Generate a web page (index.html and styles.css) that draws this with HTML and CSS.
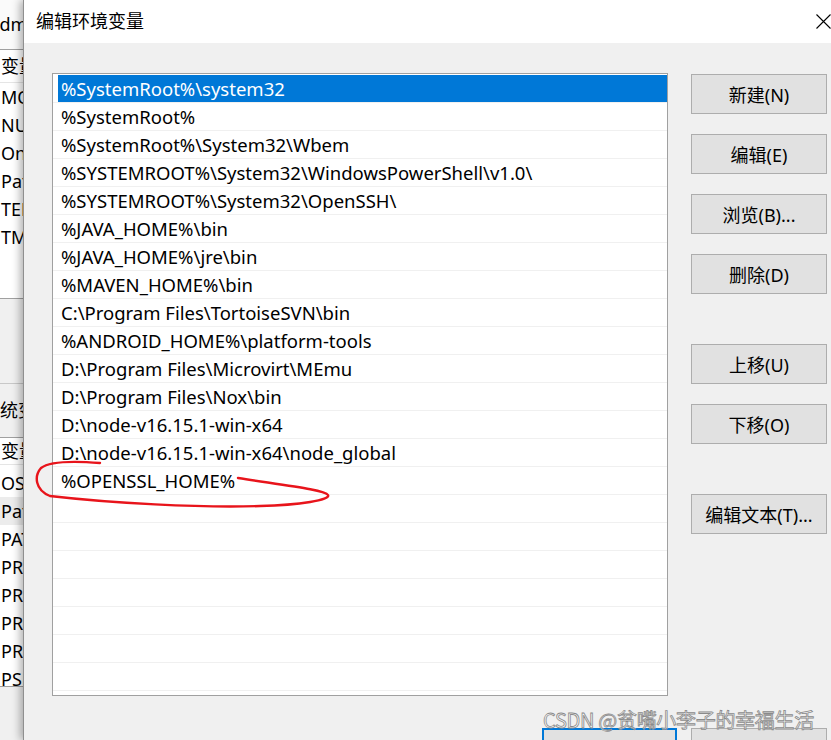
FILE: index.html
```html
<!DOCTYPE html>
<html lang="zh-CN">
    <head>
        <meta charset="UTF-8" />
        <title>编辑环境变量</title>
        <link rel="stylesheet" href="styles.css">
    </head>
    <body>
        <div class="screen">
            <!-- 后面的环境变量窗口 -->
            <aside class="behind">
                <div class="b-head">Administrator 的用户变量(U)</div>
                <div class="b-list b-user">
                    <div class="b-col">变量</div>
                    <div class="b-row">MOZ_PLUGIN_PATH</div>
                    <div class="b-row">NUMBER_OF_PROCESSORS</div>
                    <div class="b-row">OneDrive</div>
                    <div class="b-row">Path</div>
                    <div class="b-row">TEMP</div>
                    <div class="b-row">TMP</div>
                </div>
                <div class="b-gap"></div>
                <div class="b-label">系统变量(S)</div>
                <div class="b-list b-sys">
                    <div class="b-col">变量</div>
                    <div class="b-rows">
                        <div class="b-row">OS</div>
                        <div class="b-row b-sel">Path</div>
                        <div class="b-row">PATHEXT</div>
                        <div class="b-row">PROCESSOR_ARCHITECTURE</div>
                        <div class="b-row">PROCESSOR_IDENTIFIER</div>
                        <div class="b-row">PROCESSOR_LEVEL</div>
                        <div class="b-row">PROCESSOR_REVISION</div>
                        <div class="b-row">PSModulePath</div>
                    </div>
                </div>
            </aside>

            <!-- 编辑环境变量 对话框 -->
            <section class="dialog">
                <header class="titlebar">
                    <span class="title">编辑环境变量</span>
                    <svg class="close" width="15" height="15" viewBox="0 0 15 15">
                        <path d="M0.5 0.5 L14.5 14.5 M14.5 0.5 L0.5 14.5" stroke="#000" stroke-width="1.1" fill="none" />
                    </svg>
                </header>
                <div class="content">
                    <div class="main-row">
                        <div class="listbox">
                            <div class="row selected">%SystemRoot%\system32</div>
                            <div class="row">%SystemRoot%</div>
                            <div class="row">%SystemRoot%\System32\Wbem</div>
                            <div class="row">%SYSTEMROOT%\System32\WindowsPowerShell\v1.0\</div>
                            <div class="row">%SYSTEMROOT%\System32\OpenSSH\</div>
                            <div class="row">%JAVA_HOME%\bin</div>
                            <div class="row">%JAVA_HOME%\jre\bin</div>
                            <div class="row">%MAVEN_HOME%\bin</div>
                            <div class="row">C:\Program Files\TortoiseSVN\bin</div>
                            <div class="row">%ANDROID_HOME%\platform-tools</div>
                            <div class="row">D:\Program Files\Microvirt\MEmu</div>
                            <div class="row">D:\Program Files\Nox\bin</div>
                            <div class="row">D:\node-v16.15.1-win-x64</div>
                            <div class="row">D:\node-v16.15.1-win-x64\node_global</div>
                            <div class="row">%OPENSSL_HOME%</div>
                            <div class="row"></div>
                            <div class="row"></div>
                            <div class="row"></div>
                            <div class="row"></div>
                            <div class="row"></div>
                            <div class="row"></div>
                            <div class="row"></div>
                            <div class="row"></div>
                        </div>
                        <div class="side">
                            <button class="btn">新建(N)</button>
                            <button class="btn">编辑(E)</button>
                            <button class="btn">浏览(B)...</button>
                            <button class="btn">删除(D)</button>
                            <button class="btn spaced">上移(U)</button>
                            <button class="btn">下移(O)</button>
                            <button class="btn spaced">编辑文本(T)...</button>
                        </div>
                    </div>
                    <div class="footer">
                        <button class="btn default">确定</button>
                        <button class="btn">取消</button>
                    </div>
                </div>
            </section>

            <!-- 红笔圈出来的 -->
            <svg class="mark" width="831" height="740" viewBox="0 0 831 740">
                <path d="M100 463 C 75 461, 50 461, 41 468 C 34 476, 35 490, 50 496 C 110 503, 200 508, 260 506 C 300 505, 331 500, 328 495 C 325 490, 290 486, 238 478" stroke="#e8141b" stroke-width="2.4" fill="none" stroke-linecap="round" />
            </svg>
            <div class="watermark">CSDN @贫嘴小李子的幸福生活</div>
        </div>
    </body>
</html>
```

FILE: styles.css
```css
* {
    margin: 0;
    padding: 0;
    box-sizing: border-box;
}
body {
    width: 831px;
    height: 740px;
    overflow: hidden;
    font-family: "Noto Sans", "Noto Sans CJK SC", sans-serif;
    font-size: 18px;
    color: #000;
    background-color: #f0f0f0;
}
.screen {
    position: relative;
    display: flex;
    height: 740px;
    overflow: hidden;
}

/* 后面的窗口 */
.behind {
    width: 23px;
    flex: none;
    overflow: hidden;
    white-space: nowrap;
    background-color: #f0f0f0;
}
.b-head {
    height: 49px;
    line-height: 49px;
    text-indent: -12px;
    background-color: #fafafa;
}
.b-list {
    background-color: #fff;
    border-top: 1px solid #a0a0a0;
    border-bottom: 1px solid #a0a0a0;
}
.b-user {
    height: 250px;
}
.b-user .b-col {
    height: 33px;
    line-height: 32px;
}
.b-col {
    border-bottom: 1px solid #e5e5e5;
    padding-left: 1px;
}
.b-row {
    height: 28px;
    line-height: 28px;
    padding-left: 1px;
}
.b-gap {
    height: 85px;
    border-bottom: 1px solid #c8c8c8;
}
.b-label {
    height: 53px;
    line-height: 52px;
    text-indent: -18px;
}
.b-sys {
    height: 250px;
}
.b-sys .b-col {
    height: 27px;
    line-height: 26px;
}
.b-rows {
    padding-top: 4px;
}
.b-sel {
    background-color: #ececec;
}

/* 对话框 */
.dialog {
    flex: 1;
    display: flex;
    flex-direction: column;
    border-left: 1px solid #8f8f8f;
    box-shadow: -3px 0 8px rgba(0, 0, 0, 0.3);
    background-color: #f0f0f0;
}
.titlebar {
    flex: none;
    height: 43px;
    background-color: #fff;
    display: flex;
    align-items: center;
    justify-content: space-between;
    padding: 0 0 3px 12px;
}
.title {
    font-size: 18px;
}
.close {
    display: block;
    margin-top: 3px;
}
.content {
    flex: none;
    padding: 30px 4px 0 28px;
}
.main-row {
    display: flex;
    gap: 23px;
}
.listbox {
    width: 616px;
    height: 623px;
    flex: none;
    padding-top: 1px;
    border: 1px solid #a0a0a0;
    background-color: #fff;
    overflow: hidden;
    font-size: 18.5px;
}
.row {
    height: 28px;
    line-height: 27px;
    padding-left: 8px;
    border-bottom: 1px solid #f0f0f0;
    white-space: nowrap;
}
.row.selected {
    color: #fff;
    background: linear-gradient(to right, transparent 5px, #0078d7 5px);
}
.side {
    display: flex;
    flex-direction: column;
    gap: 20px;
    padding-top: 1px;
}
.btn {
    width: 136px;
    height: 40px;
    flex: none;
    font-family: inherit;
    font-size: 18px;
    color: #000;
    background-color: #e1e1e1;
    border: 1px solid #adadad;
    border-radius: 0;
}
.btn.spaced {
    margin-top: 30px;
}
.footer {
    display: flex;
    justify-content: flex-end;
    gap: 14px;
    margin-top: 32px;
}
.btn.default {
    width: 135px;
    border: 2px solid #0078d7;
}

/* 上面盖着的东西 */
.mark {
    position: absolute;
    left: 0;
    top: 0;
    pointer-events: none;
}
.watermark {
    position: absolute;
    left: 543px;
    top: 705px;
    font-family: "Noto Sans CJK SC", sans-serif;
    font-size: 20px;
    letter-spacing: -0.3px;
    white-space: nowrap;
    color: rgba(255, 255, 255, 0.6);
    -webkit-text-stroke: 0.8px #8a8a8a;
}
```
